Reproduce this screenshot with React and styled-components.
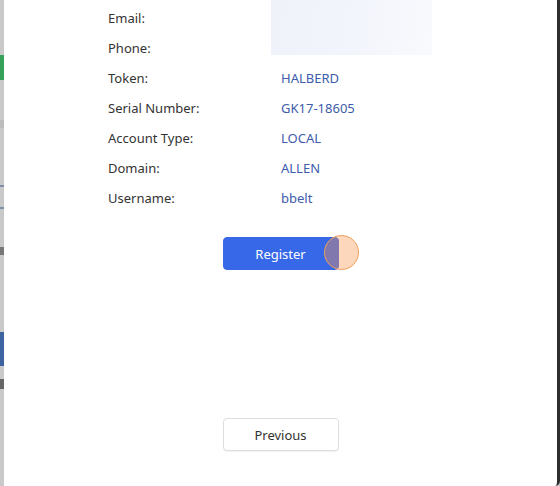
import React from 'react'
import styled, { createGlobalStyle } from 'styled-components'

const Global = createGlobalStyle`
  html, body {
    margin: 0;
    padding: 0;
    background: #c4c4c4;
  }
  #root {
    height: 486px;
  }
`

const Screen = styled.div`
  display: flex;
  width: 560px;
  height: 486px;
  overflow: hidden;
  font-family: "Noto Sans", "Open Sans", sans-serif;
  font-size: 13px;
`

const Backdrop = styled.div`
  width: 4px;
  flex: none;
  display: flex;
  flex-direction: column;
  background: #c9c9c9;
`

const Peek = styled.div`
  height: ${p => p.h}px;
  margin-top: ${p => p.top}px;
  background: ${p => p.color};
`

const Modal = styled.div`
  flex: 1;
  background: #ffffff;
  border-right: 3px solid #2e2e2e;
  border-bottom-right-radius: 5px;
  display: flex;
  flex-direction: column;
  align-items: center;
`

const Details = styled.div`
  position: relative;
  align-self: flex-start;
  margin-left: 104px;
  padding-top: 3px;
  display: grid;
  grid-template-columns: 173px auto;
  grid-auto-rows: 30px;
  align-items: center;
`

const Label = styled.div`
  color: #333333;
`

const Value = styled.div`
  color: #3d5cab;
`

const Redacted = styled.div`
  position: absolute;
  top: 0;
  left: 163px;
  width: 161px;
  height: 55px;
  background: linear-gradient(100deg, #f0f2fa 0%, #f3f5fc 55%, #f9fafd 100%);
`

const Actions = styled.div`
  position: relative;
  margin-top: 24px;
`

const Button = styled.button`
  width: 116px;
  height: 33px;
  border-radius: 4px;
  font-family: inherit;
  font-size: 13px;
  padding: 0;
  cursor: pointer;
  border: 1px solid ${p => (p.primary ? '#3768e8' : '#dedede')};
  background: ${p => (p.primary ? '#3768e8' : '#ffffff')};
  color: ${p => (p.primary ? '#ffffff' : '#333333')};
  box-shadow: ${p => (p.primary ? 'none' : '0 1px 1px rgba(0, 0, 0, 0.05)')};
  margin-top: ${p => p.gap || 0}px;
`

const Cursor = styled.div`
  position: absolute;
  left: 101px;
  top: -2px;
  width: 33px;
  height: 33px;
  border-radius: 50%;
  border: 1.5px solid #f0a05c;
  background: rgba(250, 150, 80, 0.38);
  pointer-events: none;
`

const rows = [
  ['Email:', ''],
  ['Phone:', ''],
  ['Token:', 'HALBERD'],
  ['Serial Number:', 'GK17-18605'],
  ['Account Type:', 'LOCAL'],
  ['Domain:', 'ALLEN'],
  ['Username:', 'bbelt'],
]

export default function App() {
  return (
    <Screen>
      <Global />
      <Backdrop>
        <Peek top={55} h={25} color="#36a05a" />
        <Peek top={40} h={8} color="#bdbdbd" />
        <Peek top={57} h={2} color="#8090a8" />
        <Peek top={20} h={2} color="#8090a8" />
        <Peek top={38} h={8} color="#777" />
        <Peek top={77} h={34} color="#3d64a0" />
        <Peek top={13} h={10} color="#666" />
      </Backdrop>
      <Modal>
        <Details>
          {rows.map(([label, value]) => (
            <React.Fragment key={label}>
              <Label>{label}</Label>
              <Value>{value}</Value>
            </React.Fragment>
          ))}
          <Redacted />
        </Details>
        <Actions>
          <Button primary>Register</Button>
          <Cursor />
        </Actions>
        <Button gap={148}>Previous</Button>
      </Modal>
    </Screen>
  )
}
